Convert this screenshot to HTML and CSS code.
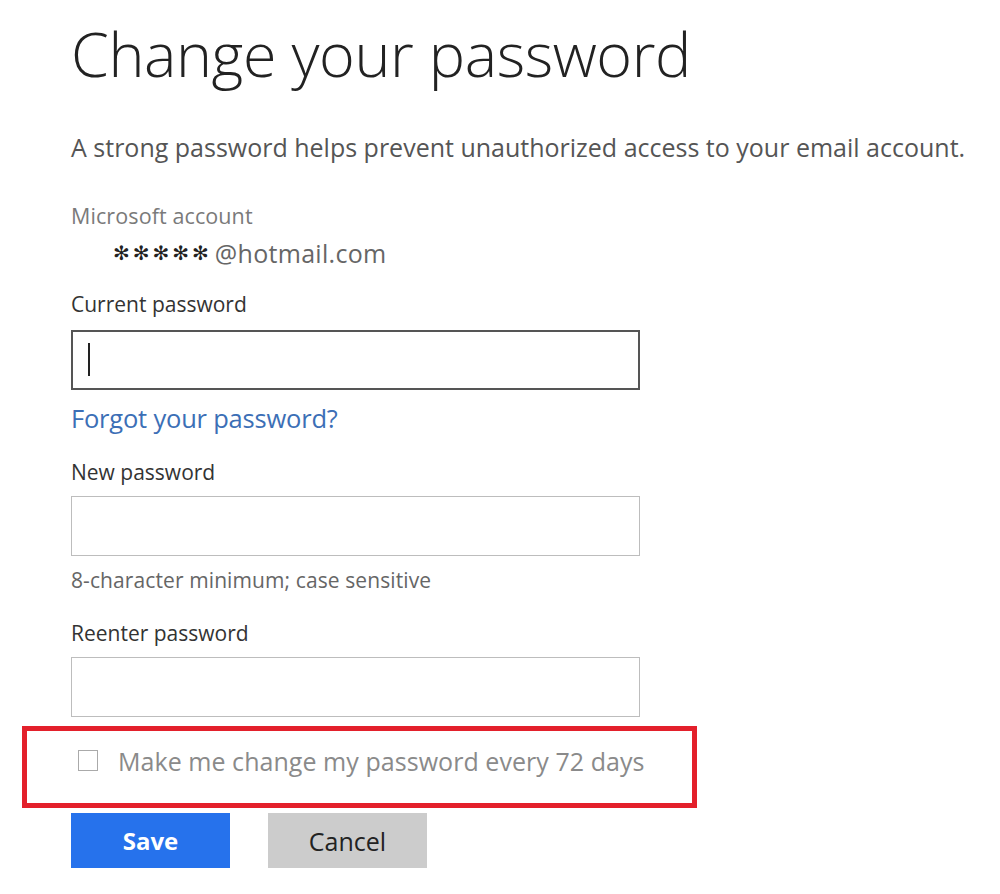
FILE: index.html
```html
<!DOCTYPE html>
<html>
<head>
<meta charset="utf-8">
<link rel="stylesheet" href="styles.css">
</head>
<body>
<div class="page">
  <h1 class="title">Change your password</h1>
  <p class="intro">A strong password helps prevent unauthorized access to your email account.</p>
  <div class="account-label">Microsoft account</div>
  <div class="account-value"><span class="stars">✻✻✻✻✻</span><span class="domain">@hotmail.com</span></div>
  <label class="field-label current">Current password</label>
  <div class="input active first-input"><span class="caret"></span></div>
  <a class="forgot" href="#">Forgot your password?</a>
  <label class="field-label after-forgot">New password</label>
  <div class="input"></div>
  <div class="hint">8-character minimum; case sensitive</div>
  <label class="field-label after-hint">Reenter password</label>
  <div class="input"></div>
  <div class="highlight">
    <span class="checkbox"></span>
    <span class="check-text">Make me change my password every 72 days</span>
  </div>
  <div class="buttons">
    <button class="btn save">Save</button>
    <button class="btn cancel">Cancel</button>
  </div>
</div>
</body>
</html>
```
FILE: styles.css
```css
html, body {
  margin: 0;
  padding: 0;
  background: #ffffff;
}
body {
  font-family: "Open Sans", "Noto Sans", "Liberation Sans", sans-serif;
  color: #333;
}
.page {
  padding-left: 71px;
  display: flex;
  flex-direction: column;
  align-items: flex-start;
}
.title {
  margin: 14px 0 0 0;
  font-weight: 300;
  font-size: 61px;
  line-height: 80px;
  color: #222;
  letter-spacing: -0.4px;
}
.intro {
  margin: 38px 0 0 0;
  font-size: 25px;
  line-height: 30px;
  color: #555;
  letter-spacing: 0;
}
.account-label {
  margin-top: 39px;
  font-size: 21.5px;
  line-height: 30px;
  color: #7a7a7a;
  letter-spacing: 0.1px;
}
.account-value {
  margin-top: 7px;
  margin-left: 42px;
  height: 30px;
  display: flex;
  align-items: center;
}
.stars {
  font-family: "DejaVu Sans", sans-serif;
  font-size: 20px;
  line-height: 30px;
  color: #222;
  letter-spacing: 3px;
}
.domain {
  margin-left: 3px;
  font-size: 25px;
  line-height: 30px;
  color: #666;
  letter-spacing: 0.3px;
}
.field-label {
  font-size: 21px;
  line-height: 30px;
  color: #333;
}
.field-label.current {
  margin-top: 21px;
}
.field-label.after-forgot {
  margin-top: 24px;
}
.field-label.after-hint {
  margin-top: 23px;
}
.input {
  box-sizing: border-box;
  width: 569px;
  height: 60px;
  border: 1px solid #bdbdbd;
  margin-top: 9px;
  position: relative;
}
.input.active {
  border: 2px solid #555;
  margin-top: 11px;
}
.caret {
  position: absolute;
  left: 15px;
  top: 11px;
  width: 2px;
  height: 33px;
  background: #222;
}
.forgot {
  margin-top: 13px;
  font-size: 25.5px;
  line-height: 30px;
  color: #3c6fb6;
  text-decoration: none;
  letter-spacing: -0.2px;
}
.hint {
  margin-top: 9px;
  font-size: 21px;
  line-height: 30px;
  color: #666;
  letter-spacing: 0.1px;
}
.highlight {
  box-sizing: border-box;
  margin-left: -49px;
  margin-top: 9px;
  width: 675px;
  height: 82px;
  border: 5px solid #e3202b;
  display: flex;
  align-items: flex-start;
  padding-top: 15px;
  padding-left: 51px;
}
.checkbox {
  box-sizing: border-box;
  width: 20px;
  height: 21px;
  border: 1px solid #aaa;
  margin-top: 4px;
  background: #fff;
}
.check-text {
  margin-left: 20px;
  font-size: 25px;
  line-height: 30px;
  color: #8a8a8a;
  letter-spacing: 0.05px;
}
.buttons {
  display: flex;
  gap: 38px;
  margin-top: 5px;
}
.btn {
  font-family: inherit;
  width: 159px;
  height: 55px;
  border: none;
  padding: 0;
  cursor: pointer;
}
.save {
  background: #2672ec;
  color: #fff;
  font-weight: 700;
  font-size: 24px;
}
.cancel {
  background: #cccccc;
  color: #222;
  font-size: 25px;
}
```
